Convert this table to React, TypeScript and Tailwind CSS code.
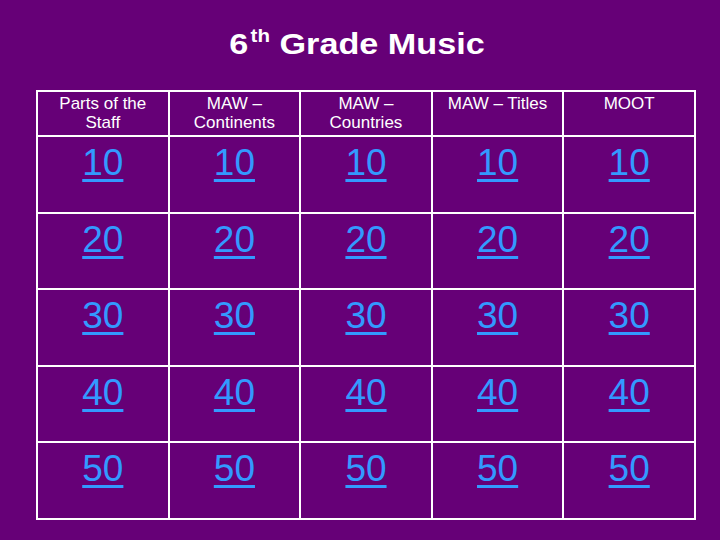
const categories = [
  ["Parts of the", "Staff"],
  ["MAW –", "Continents"],
  ["MAW –", "Countries"],
  ["MAW – Titles"],
  ["MOOT"],
];

const points = [10, 20, 30, 40, 50];

export default function App() {
  return (
    <div
      className="h-[540px] w-[720px] overflow-hidden bg-[#660077] text-white"
      style={{ fontFamily: '"Liberation Sans", Arial, sans-serif' }}
    >
      <div className="flex justify-center pt-[26px] pr-[6px]">
        <h1 className="inline-block origin-center scale-x-[1.14] text-[30px] font-bold leading-[36px]">
          6
          <sup className="relative top-[1px] ml-[2px] align-top text-[18px] leading-none">th</sup>{" "}
          Grade Music
        </h1>
      </div>
      <table className="ml-[36px] mt-[28px] w-[660px] table-fixed border-collapse">
        <tbody>
          <tr className="h-[45px]">
            {categories.map((c, i) => (
              <td
                key={i}
                className="border-2 border-white px-1 pt-[2px] align-top text-center text-[17px] leading-[19px]"
              >
                {c.map((line, j) => (
                  <div key={j}>{line}</div>
                ))}
              </td>
            ))}
          </tr>
          {points.map((p) => (
            <tr key={p} className="h-[76.5px]">
              {categories.map((_, i) => (
                <td
                  key={i}
                  className="border-2 border-white pt-[6px] align-top text-center text-[37px] leading-[40px]"
                >
                  <a className="text-[#3399ff] underline decoration-[3px] underline-offset-[4px]">
                    {p}
                  </a>
                </td>
              ))}
            </tr>
          ))}
        </tbody>
      </table>
    </div>
  );
}
